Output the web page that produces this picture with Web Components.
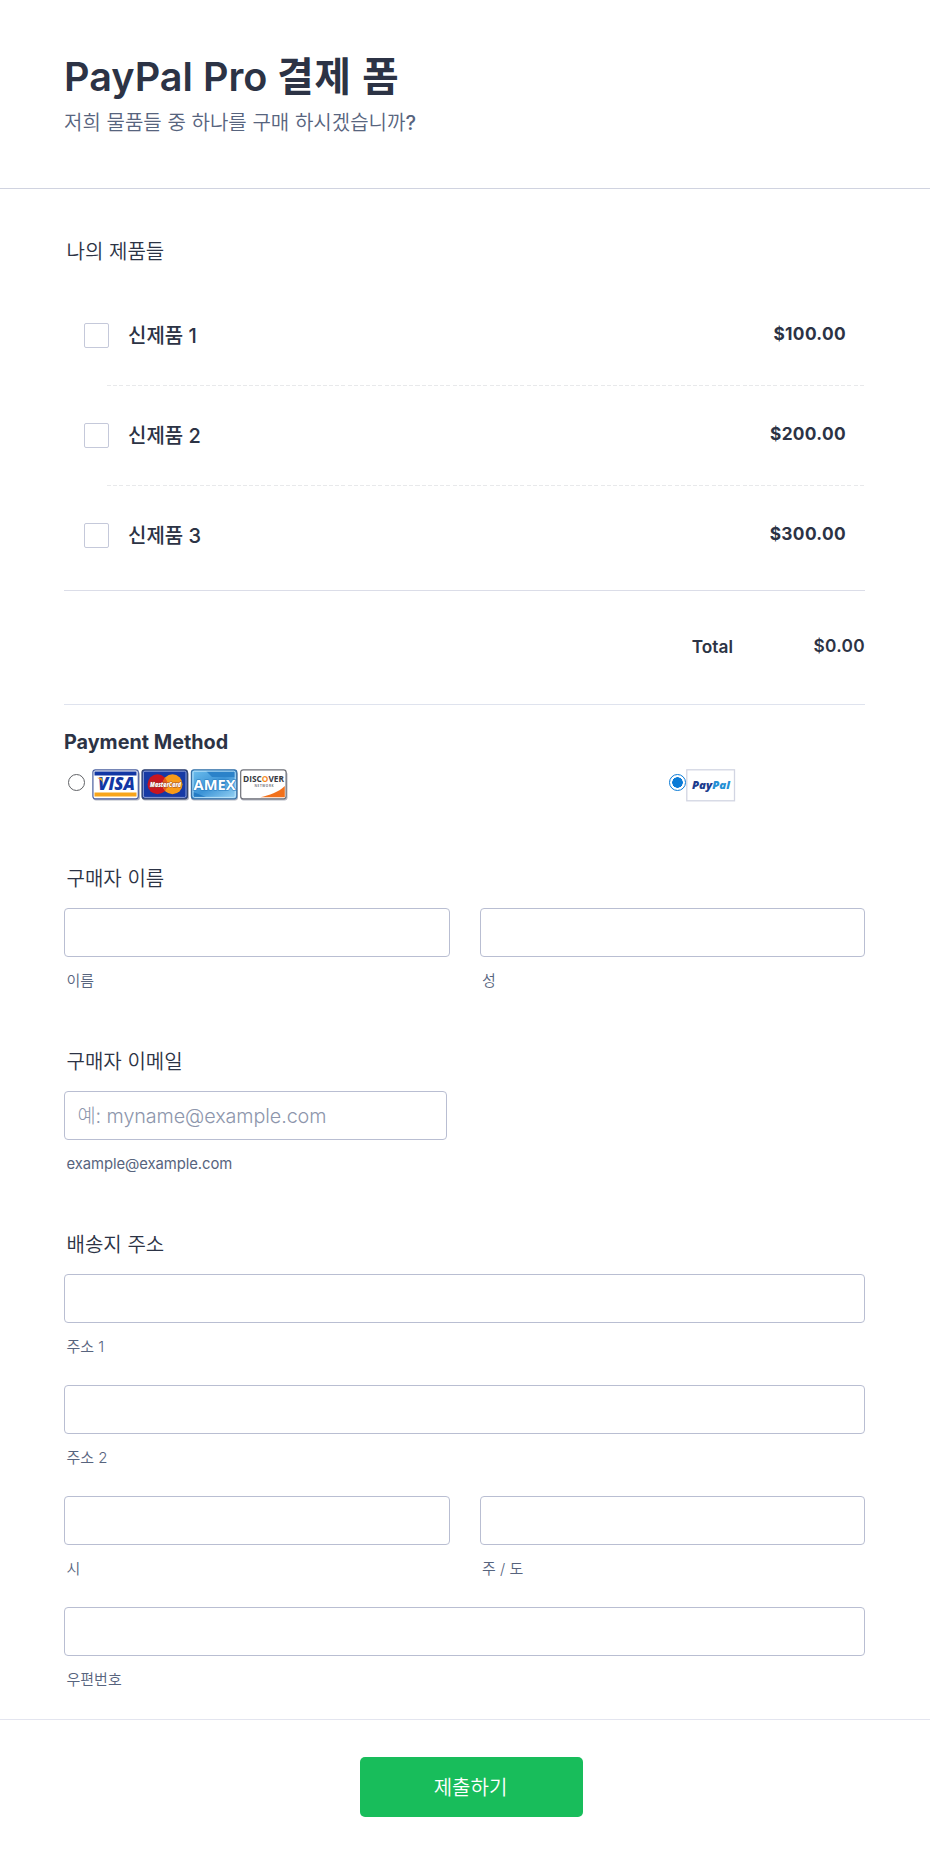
<!DOCTYPE html>
<html lang="ko">
<head>
<meta charset="utf-8">
<title>PayPal Pro 결제 폼</title>
<style>
    body {
        margin: 0;
        background: #fff;
        color: #2c3345;
        font-family: Inter, "Noto Sans CJK KR", sans-serif;
        font-size: 20px;
    }
</style>
</head>
<body>
<payment-form>
    <form-header slot="header">
        <span slot="title">PayPal Pro <span style="letter-spacing: .7px">결제 폼</span></span>
        <span slot="subtitle">저희 물품들 중 하나를 구매 하시겠습니까<b style="font-weight: 500">?</b></span>
    </form-header>

    <product-list label="나의 제품들" total="$0.00">
        <product-item price="$100.00">신제품 1</product-item>
        <product-item price="$200.00">신제품 2</product-item>
        <product-item price="$300.00" last>신제품 3</product-item>
    </product-list>

    <payment-method>Payment Method</payment-method>

    <form-section label="구매자 이름">
        <form-row>
            <form-field caption="이름"></form-field>
            <form-field caption="성"></form-field>
        </form-row>
    </form-section>

    <form-section label="구매자 이메일">
        <form-field caption="example@example.com" placeholder="예: myname@example.com" style="width: 383px"></form-field>
    </form-section>

    <form-section label="배송지 주소">
        <form-field caption="주소 1"></form-field>
        <form-field caption="주소 2"></form-field>
        <form-row>
            <form-field caption="시"></form-field>
            <form-field caption="주 / 도"></form-field>
        </form-row>
        <form-field caption="우편번호"></form-field>
    </form-section>

    <submit-bar slot="footer">제출하기</submit-bar>
</payment-form>

<script>
const define = (name, html, setup) => {
    const tpl = document.createElement('template');
    tpl.innerHTML = html;

    customElements.define(name, class extends HTMLElement {
        constructor() {
            super();
            this.attachShadow({ mode: 'open' });
            this.shadowRoot.append(tpl.content.cloneNode(true));
        }

        connectedCallback() {
            if (setup) setup(this, this.shadowRoot);
        }
    });
};

define('payment-form', `
<style>
    :host {
        display: block;
        box-sizing: border-box;
        height: 1866px;
        overflow: hidden;
    }

    main {
        box-sizing: border-box;
        height: 1530px;
        padding: 0 65px 0 64px;
    }
</style>

<slot name="header"></slot>
<main><slot></slot></main>
<slot name="footer"></slot>
`);

define('form-header', `
<style>
    :host {
        display: block;
        box-sizing: border-box;
        height: 189px;
        padding: 53px 64px 0;
        border-bottom: 1px solid #d0d3e0;
    }

    h1 {
        margin: 0;
        font-size: 39.6px;
        font-weight: 600;
        line-height: 48px;
    }

    p {
        margin: 9px 0 0;
        color: #57647e;
        font-size: 20.05px;
        font-weight: 350;
        line-height: 26px;
    }
</style>

<h1><slot name="title"></slot></h1>
<p><slot name="subtitle"></slot></p>
`);

define('product-list', `
<style>
    :host {
        display: block;
    }

    .label {
        height: 97px;
        padding: 50px 2.5px 0;
        box-sizing: border-box;
        font-size: 20.05px;
        font-weight: 350;
        line-height: 26px;
    }

    .total {
        display: flex;
        justify-content: flex-end;
        height: 113px;
        border-top: 1px solid #dbdde8;
        border-bottom: 1px solid #dfe3ee;
        font-size: 17.3px;
        font-weight: 600;
        line-height: 112px;
    }

    #total {
        width: 132px;
        line-height: 110px;
        text-align: right;
        letter-spacing: .3px;
    }
</style>

<div class="label"></div>
<slot></slot>
<div class="total">
    <span>Total</span>
    <span id="total"></span>
</div>
`, (el, root) => {
    root.querySelector('.label').textContent = el.getAttribute('label');
    root.getElementById('total').textContent = el.getAttribute('total');
});

define('product-item', `
<style>
    :host {
        display: flex;
        box-sizing: border-box;
        height: 100px;
        padding: 37px 19px 0 19.5px;
        background: repeating-linear-gradient(90deg, #e8e9eb 0 4px, transparent 4px 6.17px) 43px 100% / 100% 1px no-repeat;
    }

    :host([last]) {
        height: 104px;
        background: none;
    }

    .box {
        box-sizing: border-box;
        width: 25px;
        height: 25px;
        border: 1px solid #c5c9da;
        border-radius: 2px;
    }

    .name {
        flex: 1;
        margin: 0 0 0 19.5px;
        font-size: 20px;
        font-weight: 500;
        line-height: 26px;
    }

    .price {
        font-size: 17.3px;
        font-weight: 700;
        line-height: 21px;
        letter-spacing: .35px;
    }
</style>

<span class="box"></span>
<span class="name"><slot></slot></span>
<span class="price"></span>
`, (el, root) => {
    root.querySelector('.price').textContent = el.getAttribute('price');
});

define('payment-method', `
<style>
    :host {
        display: block;
        height: 156px;
        padding-top: 24px;
        box-sizing: border-box;
    }

    .title {
        font-size: 19.8px;
        font-weight: 700;
        line-height: 26px;
    }

    .options {
        display: grid;
        grid-template-columns: 601px 1fr;
        margin-top: 12px;
        padding-left: 4px;
    }

    .option {
        display: flex;
        align-items: flex-start;
    }

    .radio {
        box-sizing: border-box;
        width: 17px;
        height: 17px;
        margin: 7px 7px 0 0;
        border: 1px solid #606266;
        border-radius: 50%;
    }

    .radio.on {
        margin-right: 0;
        border: 1.5px solid #0b7bd6;
        background: radial-gradient(#0b7bd6 5px, #fff 5.5px);
    }

    svg {
        display: block;
        flex: none;
        margin-top: 1.5px;
    }
</style>

<div class="title"><slot></slot></div>
<div class="options">
    <div class="option">
        <span class="radio"></span>
        <svg width="198" height="32" viewBox="0 0 198 32" font-family="Open Sans, sans-serif">
            <defs>
                <linearGradient id="sky" x2="1" y2="1">
                    <stop offset="0" stop-color="#6fc0ee"/>
                    <stop offset=".5" stop-color="#3b93d6"/>
                    <stop offset="1" stop-color="#9ad5f5"/>
                </linearGradient>
            </defs>
            <g fill="#b4b7c2">
                <rect x="1" y="2.5" width="47" height="29" rx="3"/>
                <rect x="50" y="2.5" width="47" height="29" rx="3"/>
                <rect x="99" y="2.5" width="47" height="29" rx="3"/>
                <rect x="148.5" y="2.5" width="47" height="29" rx="3"/>
            </g>
            <g stroke-width="1.2">
                <rect x=".9" y=".8" width="45.4" height="29" rx="2.5" fill="#fff" stroke="#4a5f9f"/>
                <rect x="50" y=".8" width="45.4" height="29" rx="2.5" fill="#173aa5" stroke="#34466f"/>
                <rect x="99.4" y=".8" width="45.4" height="29" rx="2.5" fill="url(#sky)" stroke="#3971a7"/>
                <rect x="148.7" y=".8" width="45.4" height="29" rx="2.5" fill="#fff" stroke="#6e7078"/>
            </g>
            <path d="M2.5 2.5h42v4h-42z" fill="#1237a4"/>
            <path d="M2.5 23.5h42v4h-42z" fill="#f8a51b"/>
            <text x="6" y="21.3" textLength="37" lengthAdjust="spacingAndGlyphs" font-size="17.5" font-weight="800" font-style="italic" fill="#1237a4">VISA</text>
            <path d="M5 8.8h4.5l2.2 6.5c-1-3-3-5-6.7-6.5z" fill="#f8a51b"/>

            <rect x="51.4" y="2.2" width="42.6" height="26.2" rx="1.5" fill="none" stroke="#a9b8df" stroke-width=".8"/>
            <circle cx="65.5" cy="15.3" r="10" fill="#c91520"/>
            <circle cx="80.5" cy="15.3" r="10" fill="#f89a18"/>
            <path d="M73 8.7a10 10 0 0 1 0 13.2a10 10 0 0 1 0-13.2z" fill="#e55d1c"/>
            <text x="58" y="18" textLength="31" lengthAdjust="spacingAndGlyphs" font-size="7.4" font-weight="800" font-style="italic" fill="#fff" stroke="#8b4434" stroke-width=".8" paint-order="stroke">MasterCard</text>

            <path d="M114 2h29v6h-23z" fill="#2b82c9"/>
            <path d="M101 28V23l13 5z" fill="#237bc4"/>
            <rect x="101" y="2.2" width="42.2" height="26.2" rx="1.5" fill="none" stroke="#c2e7fa" stroke-width=".9"/>
            <text x="101.5" y="20.8" textLength="42" lengthAdjust="spacingAndGlyphs" font-size="14.5" font-weight="700" fill="#fff" stroke="#287dc2" stroke-width="1.2" paint-order="stroke">AMEX</text>

            <text x="151" y="12.8" textLength="41" lengthAdjust="spacingAndGlyphs" font-size="8.6" font-weight="700" fill="#383a42">DISC<tspan fill="#f58a1f">O</tspan>VER</text>
            <text x="162.5" y="17.5" textLength="19" font-size="3" font-weight="700" fill="#73757d">NETWORK</text>
            <path d="M192.8 17v11.3h-24.5c9-2 18-5 24.5-11.3z" fill="#f2711c"/>
        </svg>
    </div>
    <div class="option">
        <span class="radio on"></span>
        <svg width="50" height="33" viewBox="0 0 50 33" font-family="Open Sans, sans-serif">
            <rect x=".8" y=".8" width="47.7" height="31" fill="#fff" stroke="#d2d5e2" stroke-width="1.3"/>
            <text x="6" y="20.3" textLength="38" lengthAdjust="spacingAndGlyphs" font-size="11" font-weight="800" font-style="italic" fill="#1b3b8d">Pay<tspan fill="#2490d5">Pal</tspan></text>
        </svg>
    </div>
</div>
`);

define('form-section', `
<style>
    :host {
        display: block;
        height: 183px;
    }

    .label {
        margin: 0 0 16px;
        padding: 5px 2.5px 0;
        font-size: 20.05px;
        font-weight: 350;
        line-height: 26px;
    }
</style>

<div class="label"></div>
<slot></slot>
`, (el, root) => {
    root.querySelector('.label').textContent = el.getAttribute('label');
});

define('form-row', `
<style>
    :host {
        display: grid;
        grid-template-columns: 1fr 1fr;
        gap: 30px;
    }
</style>

<slot></slot>
`);

define('form-field', `
<style>
    :host {
        display: block;
        height: 111.15px;
    }

    input {
        display: block;
        box-sizing: border-box;
        width: 100%;
        height: 49px;
        padding: 0 12.5px;
        border: 1px solid #b9bed2;
        border-radius: 4px;
        background: #fff;
        font: inherit;
        font-size: 19.8px;
        font-weight: 300;
        letter-spacing: -.1px;
    }

    input::placeholder {
        color: #8d96ac;
    }

    .caption {
        padding: 14px 2.5px 0;
        color: #57647e;
        font-size: 14.85px;
        line-height: 20px;
        letter-spacing: -.08px;
    }

    .ko {
        font-size: 15px;
        font-weight: 350;
        letter-spacing: 0;
    }
</style>

<input>
<div class="caption"></div>
`, (el, root) => {
    const caption = root.querySelector('.caption');
    caption.textContent = el.getAttribute('caption');
    caption.classList.toggle('ko', /[가-힣]/.test(caption.textContent));
    root.querySelector('input').placeholder = el.getAttribute('placeholder') || '';
});

define('submit-bar', `
<style>
    :host {
        display: flex;
        justify-content: center;
        box-sizing: border-box;
        height: 147px;
        padding: 37px 0 0 12px;
        border-top: 1px solid #e3e5ef;
    }

    button {
        width: 223px;
        height: 60px;
        padding: 0 1px 2px 0;
        border: 0;
        border-radius: 5px;
        background: #18bd5b;
        color: #fff;
        font: inherit;
        font-size: 20.05px;
        font-weight: 350;
    }
</style>

<button><slot></slot></button>
`);
</script>
</body>
</html>
